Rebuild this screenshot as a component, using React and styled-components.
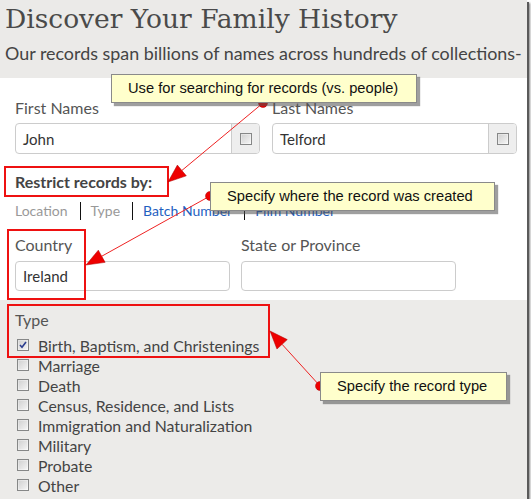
import React from 'react';
import styled, { createGlobalStyle } from 'styled-components';

const GlobalStyle = createGlobalStyle`
  html, body {
    margin: 0;
    padding: 0;
    background: #ffffff;
  }
  body {
    font-family: Lato, "Liberation Sans", sans-serif;
  }
`;

const recordTypes = [
  { label: 'Birth, Baptism, and Christenings', checked: true },
  { label: 'Marriage' },
  { label: 'Death' },
  { label: 'Census, Residence, and Lists' },
  { label: 'Immigration and Naturalization' },
  { label: 'Military' },
  { label: 'Probate' },
  { label: 'Other' },
];

const tabs = [
  { label: 'Location', active: false },
  { label: 'Type', active: false },
  { label: 'Batch Number', active: true },
  { label: 'Film Number', active: true },
];

const Frame = styled.div`
  position: relative;
  width: 527px;
  height: 499px;
  overflow: hidden;
  background: #ffffff;
  box-shadow: 2px 2px 0 #5a5a5a, 3px 3px 2px rgba(0, 0, 0, 0.5);
`;

const Header = styled.header`
  background: #ebeae8;
  height: 78px;
  padding: 2px 5px 0;
  box-sizing: border-box;
  white-space: nowrap;
`;

const Title = styled.h1`
  margin: 0;
  font-family: "DejaVu Serif", serif;
  font-weight: normal;
  font-size: 26.5px;
  line-height: 34px;
  color: #4a4a4a;
`;

const Subtitle = styled.p`
  margin: 6px 0 0;
  font-size: 17.9px;
  line-height: 22px;
  color: #444444;
`;

const WhiteSection = styled.section`
  padding: 20px 10px 10px 15px;
  height: 222px;
  box-sizing: border-box;
`;

const FieldRow = styled.div`
  display: flex;
  gap: ${(p) => p.$gap}px;
`;

const Field = styled.div`
  display: flex;
  flex-direction: column;
  width: ${(p) => p.$width}px;
`;

const Label = styled.label`
  font-size: 16px;
  line-height: 20px;
  color: #555555;
  margin-bottom: ${(p) => p.$space}px;
`;

const InputBox = styled.div`
  display: flex;
  height: ${(p) => p.$height}px;
  border: 1px solid #cccccc;
  border-radius: 4px;
  box-sizing: border-box;
  overflow: hidden;
  background: #ffffff;
`;

const InputText = styled.div`
  flex: 1;
  padding-left: 7px;
  font-size: 15px;
  color: #333333;
  display: flex;
  align-items: center;
`;

const Addon = styled.div`
  width: 27px;
  background: #eeeeee;
  border-left: 1px solid #cccccc;
  display: flex;
  align-items: center;
  justify-content: center;
`;

const Box = styled.span`
  width: 12px;
  height: 12px;
  box-sizing: border-box;
  border: 1px solid #868787;
  background: linear-gradient(135deg, #cfcfcf 0%, #ececec 75%, #fafafa 100%);
  box-shadow: inset 0 0 0 1px rgba(255, 255, 255, 0.35);
  display: inline-flex;
  align-items: center;
  justify-content: center;
  flex-shrink: 0;
`;

const Heading = styled.div`
  font-weight: bold;
  font-size: 16px;
  line-height: 20px;
  color: #444444;
  margin-top: 18px;
`;

const TabBar = styled.div`
  display: flex;
  margin-top: 10px;
  margin-bottom: 15px;
`;

const Tab = styled.span`
  font-size: 14px;
  line-height: 18px;
  padding: 0 12px 0 10px;
  color: ${(p) => (p.$active ? '#1f5fbf' : '#999999')};
  & + & {
    border-left: 1px solid #111111;
  }
  &:first-child {
    padding-left: 0;
  }
`;

const GreySection = styled.section`
  background: #ecebe9;
  padding: 10px 15px 0;
  height: 199px;
  box-sizing: border-box;
`;

const TypeList = styled.div`
  display: flex;
  flex-direction: column;
  margin-top: 5px;
`;

const TypeRow = styled.div`
  display: flex;
  align-items: center;
  height: 20px;
  padding-left: 2px;
  gap: 9px;
  font-size: 15.8px;
  color: #444444;
`;

const Highlight = styled.div`
  position: absolute;
  left: ${(p) => p.$x}px;
  top: ${(p) => p.$y}px;
  width: ${(p) => p.$w}px;
  height: ${(p) => p.$h}px;
  border: 2px solid #ee1111;
  box-sizing: border-box;
  pointer-events: none;
`;

const Callout = styled.div`
  position: absolute;
  left: ${(p) => p.$x}px;
  top: ${(p) => p.$y}px;
  width: ${(p) => p.$w}px;
  height: 29px;
  box-sizing: border-box;
  padding-left: ${(p) => p.$pad}px;
  background: #ffffcc;
  border: 1px solid #8a8a8a;
  box-shadow: 3px 3px 1px rgba(80, 80, 80, 0.55);
  font-family: "Liberation Sans", Arial, sans-serif;
  font-size: 14.7px;
  line-height: 27px;
  color: #111111;
  white-space: nowrap;
`;

const Arrows = styled.svg`
  position: absolute;
  left: 0;
  top: 0;
  pointer-events: none;
`;

const arrows = [
  { from: [263, 103], to: [168, 182] },
  { from: [210, 196], to: [86, 265] },
  { from: [320, 386], to: [270, 331] },
];

function Arrow({ from, to }) {
  const [x1, y1] = from;
  const [x2, y2] = to;
  const dx = x2 - x1;
  const dy = y2 - y1;
  const len = Math.hypot(dx, dy);
  const ux = dx / len;
  const uy = dy / len;
  const bx = x2 - ux * 18;
  const by = y2 - uy * 18;
  const px = -uy * 7;
  const py = ux * 7;
  return (
    <g>
      <line x1={x1} y1={y1} x2={bx} y2={by} stroke="#ee2222" strokeWidth="1" />
      <polygon
        points={`${x2},${y2} ${bx + px},${by + py} ${bx - px},${by - py}`}
        fill="#ee0000"
        stroke="#aa0000"
        strokeWidth="0.5"
      />
      <circle cx={x1} cy={y1} r="4.5" fill="#ee0000" stroke="#aa0000" strokeWidth="0.5" />
    </g>
  );
}

function CheckMark() {
  return (
    <svg width="8" height="8" viewBox="0 0 8 8">
      <path d="M1 4 L3 6.2 L7 1" fill="none" stroke="#2b3d8f" strokeWidth="1.6" />
    </svg>
  );
}

function TextInput({ value, height, addon }) {
  return (
    <InputBox $height={height}>
      <InputText>{value}</InputText>
      {addon && (
        <Addon>
          <Box />
        </Addon>
      )}
    </InputBox>
  );
}

export default function App() {
  return (
    <>
      <GlobalStyle />
      <Frame>
        <Header>
          <Title>Discover Your Family History</Title>
          <Subtitle>Our records span billions of names across hundreds of collections-</Subtitle>
        </Header>

        <WhiteSection>
          <FieldRow $gap={12}>
            <Field $width={245}>
              <Label $space={5}>First Names</Label>
              <TextInput value="John" height={31} addon />
            </Field>
            <Field $width={245}>
              <Label $space={5}>Last Names</Label>
              <TextInput value="Telford" height={31} addon />
            </Field>
          </FieldRow>

          <Heading>Restrict records by:</Heading>
          <TabBar>
            {tabs.map((t) => (
              <Tab key={t.label} $active={t.active}>
                {t.label}
              </Tab>
            ))}
          </TabBar>

          <FieldRow $gap={11}>
            <Field $width={215}>
              <Label $space={6}>Country</Label>
              <TextInput value="Ireland" height={30} />
            </Field>
            <Field $width={215}>
              <Label $space={6}>State or Province</Label>
              <TextInput value="" height={30} />
            </Field>
          </FieldRow>
        </WhiteSection>

        <GreySection>
          <Label $space={0}>Type</Label>
          <TypeList>
            {recordTypes.map((r) => (
              <TypeRow key={r.label}>
                <Box>{r.checked && <CheckMark />}</Box>
                {r.label}
              </TypeRow>
            ))}
          </TypeList>
        </GreySection>

        <Highlight $x={4} $y={166} $w={165} $h={31} />
        <Highlight $x={7} $y={229} $w={79} $h={71} />
        <Highlight $x={7} $y={304} $w={263} $h={54} />

        <Arrows width="527" height="499">
          {arrows.map((a, i) => (
            <Arrow key={i} from={a.from} to={a.to} />
          ))}
        </Arrows>

        <Callout $x={111} $y={74} $w={306} $pad={16}>
          Use for searching for records (vs. people)
        </Callout>
        <Callout $x={210} $y={182} $w={285} $pad={16}>
          Specify where the record was created
        </Callout>
        <Callout $x={320} $y={372} $w={187} $pad={16}>
          Specify the record type
        </Callout>
      </Frame>
    </>
  );
}
